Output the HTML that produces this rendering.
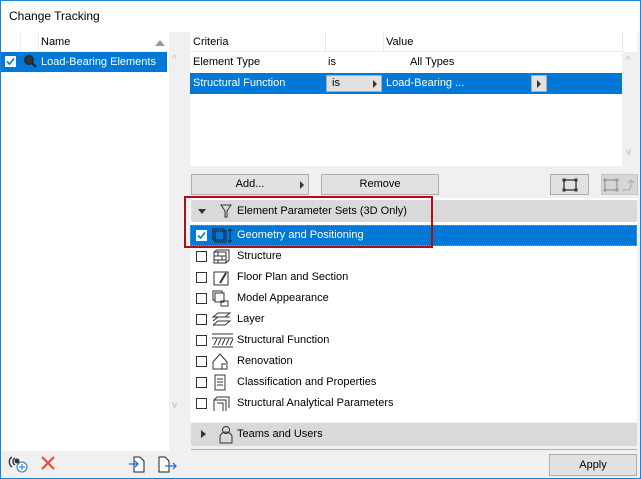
<!DOCTYPE html>
<html><head><meta charset="utf-8"><style>
*{box-sizing:border-box;margin:0;padding:0}
body{width:641px;height:479px;overflow:hidden;font-family:"Liberation Sans",sans-serif;font-size:11px;color:#000;background:#f0f0f0;position:relative}
.a{position:absolute}
.win{left:0;top:0;width:641px;height:479px;border:1px solid #1883d7;}
.btn{position:absolute;background:#e1e1e1;border:1px solid #adadad;text-align:center;line-height:18px;font-size:11px}
.cb{position:absolute;width:11px;height:11px;border:1px solid #333;background:#fff}
.row{position:absolute;left:190px;width:447px;height:21px;line-height:21px}
.row .cb{left:6px;top:5px}
.row .t{position:absolute;left:47px}
.row svg{position:absolute;left:22px;top:2px}
</style></head><body>
<div class="a win"></div>
<div class="a" style="left:1px;top:1px;width:639px;height:31px;background:#fff"></div>
<div class="a" style="left:9px;top:9px;font-size:12px">Change Tracking</div>
<!-- left pane -->
<div class="a" style="left:1px;top:32px;width:168px;height:419px;background:#fff"></div>
<div class="a" style="left:1px;top:32px;width:166px;height:20px;background:#fff;border-bottom:1px solid #f0f0f0"></div>
<div class="a" style="left:20px;top:32px;width:1px;height:20px;background:#eee"></div>
<div class="a" style="left:38px;top:32px;width:1px;height:20px;background:#eee"></div>
<div class="a" style="left:41px;top:36px">Name</div>
<div class="a" style="left:155px;top:40px;width:0;height:0;border-left:5px solid transparent;border-right:5px solid transparent;border-bottom:6px solid #999"></div>
<div class="a" style="left:1px;top:52px;width:166px;height:20px;background:#0078d7"></div>
<div class="cb" style="left:5px;top:56px;border-color:#fff"><svg width="9" height="9" class="a" style="left:0;top:0"><path d="M1 4.5L3.5 7L8 1.5" stroke="#0078d7" stroke-width="1.6" fill="none"/></svg></div>
<svg class="a" style="left:23px;top:54px" width="14" height="14"><circle cx="6" cy="6" r="4.5" fill="#333" stroke="#222"/><path d="M9 9L13 13" stroke="#222" stroke-width="2"/></svg>
<div class="a" style="left:41px;top:56px;color:#fff">Load-Bearing Elements</div>
<div class="a" style="left:169px;top:32px;width:16px;height:419px;background:#f0f0f0"></div>
<div class="a" style="left:172px;top:54px;color:#bbb;font-size:10px">^</div>
<div class="a" style="left:172px;top:400px;color:#bbb;font-size:10px">v</div>
<!-- left toolbar icons -->
<svg class="a" style="left:8px;top:454px" width="22" height="20"><path d="M4 3a6 6 0 0 0 0 10M7 4a4 4 0 0 0 0 7" stroke="#333" fill="none" stroke-width="1.4"/><circle cx="9" cy="7" r="2.5" fill="#333"/><circle cx="14" cy="13" r="5" fill="#fff" stroke="#1e73d8"/><path d="M14 10v6M11 13h6" stroke="#1e73d8"/></svg>
<svg class="a" style="left:41px;top:456px" width="14" height="14"><path d="M1 1L13 13M13 1L1 13" stroke="#f0471f" stroke-width="2"/></svg>
<svg class="a" style="left:128px;top:455px" width="20" height="18"><path d="M6 2h6l4 4v11H6z" fill="#fff" stroke="#222"/><path d="M1 9h9M7 6l3 3-3 3" stroke="#1e73d8" fill="none" stroke-width="1.3"/></svg>
<svg class="a" style="left:157px;top:455px" width="22" height="18"><path d="M2 2h6l4 4v11H2z" fill="#fff" stroke="#222"/><path d="M8 11h11M16 8l3 3-3 3" stroke="#1e73d8" fill="none" stroke-width="1.3"/></svg>
<!-- criteria table -->
<div class="a" style="left:190px;top:32px;width:447px;height:134px;background:#fff"></div>
<div class="a" style="left:190px;top:32px;width:432px;height:20px;border-bottom:1px solid #f0f0f0"></div>
<div class="a" style="left:325px;top:32px;width:1px;height:20px;background:#e8e8e8"></div>
<div class="a" style="left:383px;top:32px;width:1px;height:20px;background:#e8e8e8"></div>
<div class="a" style="left:622px;top:32px;width:1px;height:20px;background:#e8e8e8"></div>
<div class="a" style="left:193px;top:36px">Criteria</div>
<div class="a" style="left:386px;top:36px">Value</div>
<div class="a" style="left:622px;top:52px;width:15px;height:114px;background:#f0f0f0"></div>
<div class="a" style="left:626px;top:55px;color:#bbb;font-size:10px">^</div>
<div class="a" style="left:626px;top:147px;color:#bbb;font-size:10px">v</div>
<div class="a" style="left:193px;top:56px">Element Type</div>
<div class="a" style="left:328px;top:56px">is</div>
<div class="a" style="left:410px;top:56px">All Types</div>
<div class="a" style="left:190px;top:73px;width:432px;height:21px;background:#0078d7"></div>
<div class="a" style="left:193px;top:77px;color:#fff">Structural Function</div>
<div class="a" style="left:326px;top:75px;width:56px;height:17px;background:#e1e1e1;border:1px solid #adadad;line-height:15px;padding-left:5px">is<span class="a" style="right:4px;top:4px;border-top:4px solid transparent;border-bottom:4px solid transparent;border-left:4px solid #333"></span></div>
<div class="a" style="left:386px;top:77px;color:#fff">Load-Bearing ...</div>
<div class="a" style="left:531px;top:75px;width:16px;height:17px;background:#e1e1e1;border:1px solid #adadad"><span class="a" style="left:5px;top:4px;border-top:4px solid transparent;border-bottom:4px solid transparent;border-left:4px solid #333"></span></div>
<!-- buttons -->
<div class="btn" style="left:191px;top:174px;width:118px;height:21px">Add...<span class="a" style="right:4px;top:6px;border-top:4px solid transparent;border-bottom:4px solid transparent;border-left:4px solid #333"></span></div>
<div class="btn" style="left:321px;top:174px;width:118px;height:21px">Remove</div>
<div class="btn" style="left:550px;top:174px;width:39px;height:21px"><svg class="a" style="left:11px;top:3px" width="16" height="14"><rect x="2" y="2" width="12" height="10" fill="none" stroke="#333" stroke-width="1.3"/><rect x="0.5" y="0.5" width="3" height="3" fill="#333"/><rect x="12.5" y="0.5" width="3" height="3" fill="#333"/><rect x="0.5" y="10.5" width="3" height="3" fill="#333"/><rect x="12.5" y="10.5" width="3" height="3" fill="#333"/></svg></div>
<div class="a" style="left:601px;top:174px;width:37px;height:21px;background:#d6d6d6;border:1px solid #c8c8c8"><svg class="a" style="left:1px;top:3px" width="34" height="14"><rect x="2" y="2" width="12" height="10" fill="none" stroke="#999" stroke-width="1.3"/><rect x="0.5" y="0.5" width="3" height="3" fill="#999"/><rect x="12.5" y="0.5" width="3" height="3" fill="#999"/><rect x="0.5" y="10.5" width="3" height="3" fill="#999"/><rect x="12.5" y="10.5" width="3" height="3" fill="#999"/><path d="M19 12h6c3 0 3-4 3-9M25 5l3-3 3 3" stroke="#aaa" fill="none"/></svg></div>
<!-- param list -->
<div class="a" style="left:190px;top:198px;width:447px;height:224px;background:#fff"></div>
<div class="a" style="left:191px;top:200px;width:446px;height:22px;background:#d9d9d9;border-radius:2px"></div>
<div class="a" style="left:198px;top:209px;border-left:4px solid transparent;border-right:4px solid transparent;border-top:5px solid #333"></div>
<svg class="a" style="left:220px;top:204px" width="12" height="14"><path d="M1 1h10L7 7v6H5V7z" fill="none" stroke="#333"/></svg>
<div class="a" style="left:237px;top:205px">Element Parameter Sets (3D Only)</div>
<div class="row" style="top:225px;height:21px;background:#0078d7;outline:1px dotted #c86;outline-offset:-1px">
<div class="cb" style="border-color:#fff"><svg width="9" height="9" class="a" style="left:0;top:0"><path d="M1 4.5L3.5 7L8 1.5" stroke="#0078d7" stroke-width="1.6" fill="none"/></svg></div>
<svg width="22" height="17"><rect x="1" y="2" width="11" height="11" fill="none" stroke="#222"/><rect x="3" y="4" width="11" height="11" fill="none" stroke="#222"/><path d="M18 2v13M16 4l2-2 2 2M16 13l2 2 2-2" stroke="#222" fill="none"/></svg>
<span class="t" style="color:#fff">Geometry and Positioning</span></div>
<div class="row" style="top:246px"><div class="cb"></div><svg width="20" height="17"><path d="M2 4h12v11H2zM2 8h12M2 12h12M6 4v4M10 8v4M6 12v3M2 4l3-2h12v10l-3 3" fill="none" stroke="#333"/></svg><span class="t">Structure</span></div>
<div class="row" style="top:267px"><div class="cb"></div><svg width="20" height="17"><path d="M2 3h14v13H2z" fill="none" stroke="#333"/><path d="M14 4l-6 10" stroke="#333" stroke-width="2"/></svg><span class="t">Floor Plan and Section</span></div>
<div class="row" style="top:288px"><div class="cb"></div><svg width="20" height="17"><rect x="1" y="1" width="9" height="9" fill="none" stroke="#333"/><rect x="3" y="3" width="9" height="9" fill="#fff" stroke="#333"/><path d="M9 16v-5h7v5zM12 11V6" stroke="#333" fill="none"/></svg><span class="t">Model Appearance</span></div>
<div class="row" style="top:309px"><div class="cb"></div><svg width="20" height="17"><path d="M1 6l5-4h12l-5 4zM1 10l5-4M1 14l5-4h12l-5 4H1M13 6l5 0" fill="none" stroke="#333"/></svg><span class="t">Layer</span></div>
<div class="row" style="top:330px"><div class="cb"></div><svg width="22" height="17"><path d="M0 2h21M0 15h21M0 6h21" stroke="#333"/><path d="M2 13l3-6M6 13l3-6M10 13l3-6M14 13l3-6M18 13l3-6" stroke="#333"/></svg><span class="t">Structural Function</span></div>
<div class="row" style="top:351px"><div class="cb"></div><svg width="20" height="17"><path d="M1 16V9l7-8 7 8v7zM10 16v-5h4" fill="none" stroke="#333"/></svg><span class="t">Renovation</span></div>
<div class="row" style="top:372px"><div class="cb"></div><svg width="20" height="17"><path d="M3 1h10v15H3z" fill="none" stroke="#333"/><path d="M5 5h6M5 8h6M5 11h6" stroke="#333"/></svg><span class="t">Classification and Properties</span></div>
<div class="row" style="top:393px"><div class="cb"></div><svg width="20" height="17"><path d="M2 16V5l3-3h12v11M2 5h12v11M5 8h6v8" fill="none" stroke="#333"/></svg><span class="t">Structural Analytical Parameters</span></div>
<div class="a" style="left:191px;top:423px;width:446px;height:23px;background:#d9d9d9;border-radius:2px"></div>
<div class="a" style="left:201px;top:430px;border-top:4px solid transparent;border-bottom:4px solid transparent;border-left:5px solid #333"></div>
<svg class="a" style="left:219px;top:425px" width="14" height="19"><circle cx="7" cy="5" r="3.5" fill="none" stroke="#333"/><path d="M1 18v-6a6 5 0 0 1 12 0v6z" fill="none" stroke="#333"/></svg>
<div class="a" style="left:237px;top:428px">Teams and Users</div>
<div class="a" style="left:191px;top:449px;width:446px;height:1px;background:#b0b0b0"></div>
<div class="btn" style="left:549px;top:454px;width:88px;height:22px;line-height:20px">Apply</div>
<!-- red box -->
<div class="a" style="left:184px;top:196px;width:249px;height:52px;border:2px solid #b00e12"></div>
</body></html>
